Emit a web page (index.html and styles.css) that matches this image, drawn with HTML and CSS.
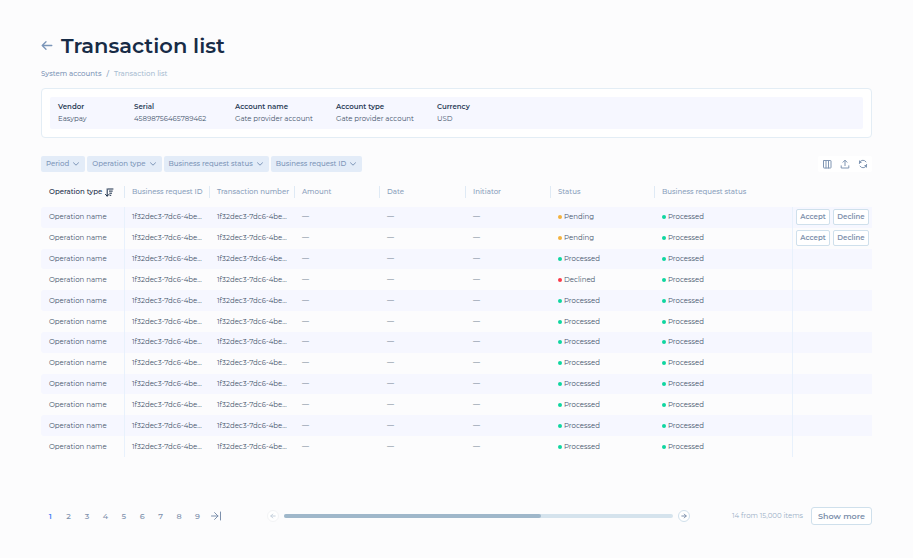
FILE: index.html
```html
<!DOCTYPE html>
<html lang="en">
<head>
<meta charset="utf-8">
<meta name="viewport" content="width=device-width, initial-scale=1">
<title>Transaction list</title>
<link rel="stylesheet" href="styles.css">
</head>
<body>
<svg class="sprite" aria-hidden="true">
<symbol id="chevron" viewBox="0 0 8 8"><path d="M1.5 2.8 4 5.2 6.5 2.8"/></symbol>
<symbol id="arrow" viewBox="0 0 8 8"><path d="M1.8 4H6.2M4.3 2.1 6.2 4 4.3 5.9"/></symbol>
</svg>
<main class="page">
<header class="heading">
<a class="back" href="#" aria-label="Back"><svg width="12" height="12" viewBox="0 0 12 12"><path d="M10.8 5.5H1.2M5 1.7 1.2 5.5 5 9.3"/></svg></a>
<h1>Transaction list</h1>
</header>
<nav class="crumbs" aria-label="Breadcrumb"><a href="#">System accounts</a><span>/</span><span class="current">Transaction list</span></nav>
<section class="card">
<dl class="details">
<div><dt>Vendor</dt><dd>Easypay</dd></div>
<div><dt>Serial</dt><dd>45898756465789462</dd></div>
<div><dt>Account name</dt><dd>Gate provider account</dd></div>
<div><dt>Account type</dt><dd>Gate provider account</dd></div>
<div><dt>Currency</dt><dd>USD</dd></div>
</dl>
</section>
<div class="toolbar">
<div class="filters">
<button class="filter" type="button">Period<svg><use href="#chevron"/></svg></button>
<button class="filter" type="button">Operation type<svg><use href="#chevron"/></svg></button>
<button class="filter" type="button">Business request status<svg><use href="#chevron"/></svg></button>
<button class="filter" type="button">Business request ID<svg><use href="#chevron"/></svg></button>
</div>
<div class="tools">
<button type="button" aria-label="Columns"><svg width="10" height="10" viewBox="0 0 10 10"><rect x="1.5" y="1.5" width="7.5" height="7.5" rx=".5"/><path d="M4 1.5V9M6.5 1.5V9"/></svg></button>
<button type="button" aria-label="Export"><svg width="10" height="10" viewBox="0 0 10 10"><path d="M5 6.6V1.4M3 3.2 5 1.2 7 3.2M1.2 6.8V9H8.8V6.8"/></svg></button>
<button type="button" aria-label="Refresh"><svg width="10" height="10" viewBox="0 0 10 10"><path d="M1.3 4.6A3.7 3.7 0 0 1 8 2.8M8.7 5.4A3.7 3.7 0 0 1 2 7.2"/><path class="solid" d="M1 1V4H4ZM9 9V6H6Z"/></svg></button>
</div>
</div>
<table class="transactions">
<colgroup><col class="c-type"><col class="c-id"><col class="c-id"><col class="c-id"><col class="c-date"><col class="c-id"><col class="c-status"><col><col class="c-actions"></colgroup>
<thead><tr>
<th class="sorted" scope="col"><span>Operation type<svg width="9" height="9" viewBox="0 0 9 9"><path d="M2.2.8V8M.5 6.4 2.2 8.2 3.9 6.4M3.4 1H8M4.4 3.1H7.3M4.7 5.2H6.6M5 7.3H5.8"/></svg></span></th>
<th scope="col"><span>Business request ID</span></th>
<th scope="col"><span>Transaction number</span></th>
<th scope="col"><span>Amount</span></th>
<th scope="col"><span>Date</span></th>
<th scope="col"><span>Initiator</span></th>
<th scope="col"><span>Status</span></th>
<th scope="col"><span>Business request status</span></th>
<td></td>
</tr></thead>
<tbody>
<tr><td>Operation name</td><td>1f32dec3-7dc6-4be...</td><td>1f32dec3-7dc6-4be...</td><td>—</td><td>—</td><td>—</td><td><span class="state pending">Pending</span></td><td><span class="state">Processed</span></td><td><div class="actions"><button type="button">Accept</button><button type="button">Decline</button></div></td></tr>
<tr><td>Operation name</td><td>1f32dec3-7dc6-4be...</td><td>1f32dec3-7dc6-4be...</td><td>—</td><td>—</td><td>—</td><td><span class="state pending">Pending</span></td><td><span class="state">Processed</span></td><td><div class="actions"><button type="button">Accept</button><button type="button">Decline</button></div></td></tr>
<tr><td>Operation name</td><td>1f32dec3-7dc6-4be...</td><td>1f32dec3-7dc6-4be...</td><td>—</td><td>—</td><td>—</td><td><span class="state">Processed</span></td><td><span class="state">Processed</span></td><td></td></tr>
<tr><td>Operation name</td><td>1f32dec3-7dc6-4be...</td><td>1f32dec3-7dc6-4be...</td><td>—</td><td>—</td><td>—</td><td><span class="state declined">Declined</span></td><td><span class="state">Processed</span></td><td></td></tr>
<tr><td>Operation name</td><td>1f32dec3-7dc6-4be...</td><td>1f32dec3-7dc6-4be...</td><td>—</td><td>—</td><td>—</td><td><span class="state">Processed</span></td><td><span class="state">Processed</span></td><td></td></tr>
<tr><td>Operation name</td><td>1f32dec3-7dc6-4be...</td><td>1f32dec3-7dc6-4be...</td><td>—</td><td>—</td><td>—</td><td><span class="state">Processed</span></td><td><span class="state">Processed</span></td><td></td></tr>
<tr><td>Operation name</td><td>1f32dec3-7dc6-4be...</td><td>1f32dec3-7dc6-4be...</td><td>—</td><td>—</td><td>—</td><td><span class="state">Processed</span></td><td><span class="state">Processed</span></td><td></td></tr>
<tr><td>Operation name</td><td>1f32dec3-7dc6-4be...</td><td>1f32dec3-7dc6-4be...</td><td>—</td><td>—</td><td>—</td><td><span class="state">Processed</span></td><td><span class="state">Processed</span></td><td></td></tr>
<tr><td>Operation name</td><td>1f32dec3-7dc6-4be...</td><td>1f32dec3-7dc6-4be...</td><td>—</td><td>—</td><td>—</td><td><span class="state">Processed</span></td><td><span class="state">Processed</span></td><td></td></tr>
<tr><td>Operation name</td><td>1f32dec3-7dc6-4be...</td><td>1f32dec3-7dc6-4be...</td><td>—</td><td>—</td><td>—</td><td><span class="state">Processed</span></td><td><span class="state">Processed</span></td><td></td></tr>
<tr><td>Operation name</td><td>1f32dec3-7dc6-4be...</td><td>1f32dec3-7dc6-4be...</td><td>—</td><td>—</td><td>—</td><td><span class="state">Processed</span></td><td><span class="state">Processed</span></td><td></td></tr>
<tr><td>Operation name</td><td>1f32dec3-7dc6-4be...</td><td>1f32dec3-7dc6-4be...</td><td>—</td><td>—</td><td>—</td><td><span class="state">Processed</span></td><td><span class="state">Processed</span></td><td></td></tr>
</tbody>
</table>
<footer class="footer">
<nav class="pages" aria-label="Pages">
<a class="active" href="#" aria-current="page">1</a><a href="#">2</a><a href="#">3</a><a href="#">4</a><a href="#">5</a><a href="#">6</a><a href="#">7</a><a href="#">8</a><a href="#">9</a>
<a href="#" aria-label="Last page"><svg width="12" height="10" viewBox="0 0 12 10"><path d="M1.5 5H8M4.6 1.6 8 5 4.6 8.4M10.5 1V9"/></svg></a>
</nav>
<div class="scroller">
<button class="step prev" type="button" aria-label="Scroll left" disabled><svg><use href="#arrow"/></svg></button>
<div class="track"><div class="thumb"></div></div>
<button class="step" type="button" aria-label="Scroll right"><svg><use href="#arrow"/></svg></button>
</div>
<div class="more"><span>14 from 15,000 items</span><button type="button">Show more</button></div>
</footer>
</main>
</body>
</html>
```
FILE: styles.css
```css
* { box-sizing: border-box; }

body {
  margin: 0;
  background: #fcfcfd;
  color: #45556c;
  font: 7px/12px Montserrat, Inter, sans-serif;
}

button {
  font: inherit;
  color: inherit;
  padding: 0;
  border: 0;
  background: none;
  cursor: pointer;
}

a { color: inherit; text-decoration: none; }

svg {
  fill: none;
  stroke: currentColor;
  stroke-width: 1;
  stroke-linecap: round;
  stroke-linejoin: round;
  flex: none;
}

.sprite { display: none; }

.page { padding: 31px 41px 24px; }

.heading { display: flex; align-items: center; gap: 8px; }
.heading h1 {
  margin: 0;
  font-size: 21px;
  line-height: 30px;
  font-weight: 600;
  color: #172b46;
}
.back { display: flex; color: #7a95b8; }
.back svg { stroke-width: 1.3; }

.crumbs {
  display: flex;
  gap: 5px;
  margin-top: 7px;
  color: #7e96b8;
  font-weight: 500;
}
.crumbs .current { color: #a9bdd2; }

.card {
  margin-top: 8px;
  padding: 8px;
  border: 1px solid #e3edf5;
  border-radius: 4px;
  background: #fff;
}
.details {
  display: flex;
  margin: 0;
  padding: 4px 8px;
  border-radius: 2px;
  background: #f6f7ff;
}
.details div { width: 101px; }
.details div:first-child { width: 76px; }
.details dt { color: #2c3e58; font-weight: 600; }
.details dd { margin: 0; }

.toolbar {
  display: flex;
  justify-content: space-between;
  margin-top: 18px;
}
.filters { display: flex; gap: 2px; }
.filter {
  display: flex;
  align-items: center;
  gap: 3px;
  height: 16px;
  padding: 0 5px;
  border-radius: 2px;
  background: #e3ecf8;
  color: #7d96b8;
  font-weight: 500;
}
.filter svg { width: 8px; height: 8px; }
.tools {
  display: flex;
  align-items: center;
  gap: 8px;
  padding: 0 4px;
  border-radius: 2px;
  background: #fff;
  color: #8096b3;
}
.tools button { display: flex; }
.tools .solid { fill: currentColor; stroke: none; }

.transactions {
  width: 100%;
  height: 280px;
  margin-top: 5px;
  table-layout: fixed;
  border-collapse: separate;
  border-spacing: 0;
}
.c-type { width: 83px; }
.c-id { width: 85px; }
.c-date { width: 86px; }
.c-status { width: 104px; }
.c-actions { width: 80px; }
.transactions th,
.transactions td {
  padding: 0 0 0 8px;
  text-align: left;
  white-space: nowrap;
}
.transactions thead tr { height: 30px; }
.transactions tbody tr { height: 20px; }
.transactions th {
  padding: 0;
  color: #8aa0bc;
  font-weight: 500;
}
.transactions th span {
  display: flex;
  align-items: center;
  gap: 3px;
  padding-left: 7px;
  border-left: 1px solid #dfeaf5;
}
.transactions .sorted { color: #172b46; }
.transactions .sorted span { border-color: transparent; }
.transactions tbody tr:nth-child(odd) { background: #f6f7ff; }
.transactions tbody td:first-child { border-radius: 3px 0 0 3px; }
.transactions tbody td:nth-child(2),
.transactions tbody td:last-child {
  padding-left: 7px;
  border-left: 1px solid #e8f1fc;
}
.transactions tbody td:last-child { padding: 0 3px; }

.state { display: flex; align-items: center; gap: 2px; }
.state::before {
  content: "";
  width: 4px;
  height: 4px;
  border-radius: 50%;
  background: #0fd6a0;
}
.state.pending::before { background: #f3b23e; }
.state.declined::before { background: #fb3b4b; }

.actions { display: flex; gap: 3px; }
.actions button,
.more button {
  border: 1px solid #cfe0ec;
  border-radius: 2px;
  background: #fff;
  color: #7d90ac;
  font-weight: 600;
}
.actions button { flex: auto; height: 16px; }

.footer {
  display: flex;
  align-items: center;
  justify-content: space-between;
  margin-top: 50px;
  color: #7d90ac;
}
.pages { display: flex; width: 184px; font-size: 8px; font-weight: 500; }
.pages a {
  display: flex;
  flex: 1;
  align-items: center;
  justify-content: center;
}
.pages .active { color: #4c83f5; font-weight: 600; }

.scroller { display: flex; align-items: center; gap: 5px; flex: 1; margin: 0 42px; }
.track {
  flex: 1;
  height: 4px;
  border-radius: 2px;
  background: #d5e3ed;
}
.thumb { width: 66%; height: 4px; border-radius: 2px; background: #9fb7ca; }
.step {
  display: flex;
  align-items: center;
  justify-content: center;
  width: 12px;
  height: 12px;
  border: 1px solid #d0e0ec;
  border-radius: 50%;
  background: #fff;
  color: #7d90ac;
}
.step svg { width: 8px; height: 8px; }
.prev { border-color: #f3f4f6; color: #c5d0dc; }
.prev svg { transform: rotate(180deg); }

.more { display: flex; align-items: center; gap: 8px; color: #9aafc6; }
.more button {
  height: 18px;
  padding: 0 6px;
  border-radius: 3px;
  font-size: 8px;
}
```
